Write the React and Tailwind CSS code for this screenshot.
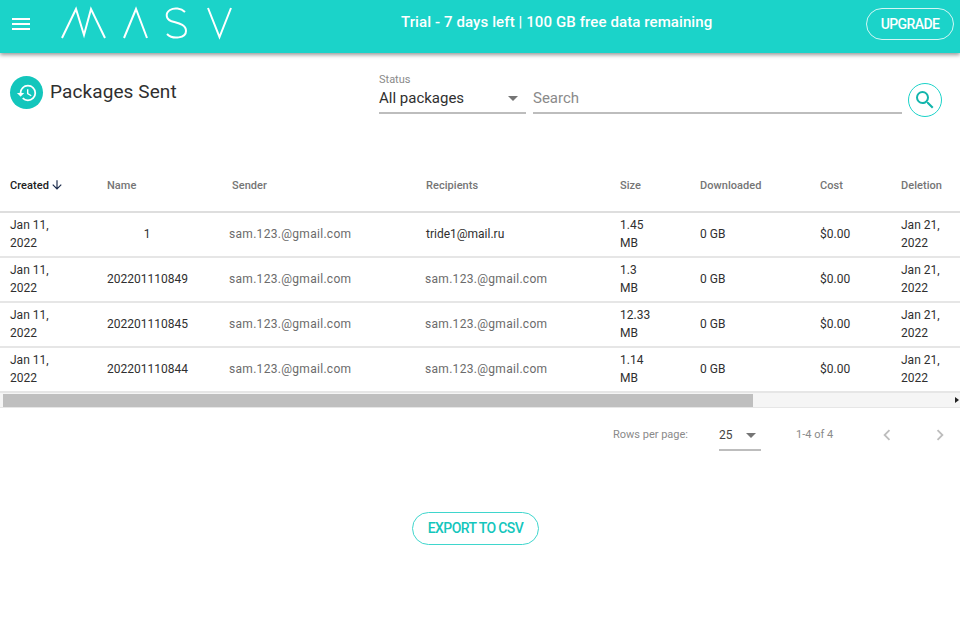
import { MdMenu, MdSearch, MdArrowDownward, MdChevronLeft, MdChevronRight, MdHistory, MdArrowDropDown } from 'react-icons/md'

const rows = [
  { name: '1', center: true, recipient: 'tride1@mail.ru', dark: true, size: ['1.45', 'MB'] },
  { name: '202201110849', recipient: 'sam.123.@gmail.com', size: ['1.3', 'MB'] },
  { name: '202201110845', recipient: 'sam.123.@gmail.com', size: ['12.33', 'MB'] },
  { name: '202201110844', recipient: 'sam.123.@gmail.com', size: ['1.14', 'MB'] },
]

const columns = 'grid grid-cols-[107px_122px_196px_195px_80px_120px_81px_59px]'

function Logo() {
  return (
    <svg width="172" height="36" viewBox="0 0 172 36" fill="none" stroke="white" strokeWidth="2">
      <path d="M1 32 L15 3 L23 29 L30 3 L44 32" />
      <path d="M63 32 L75 3 L86 32" />
      <path d="M124 6 C120 2 113 1.5 109 4 C104 7 105 13 110 15 C116 17 125 18 125 25 C125 32 112 34 106 28" />
      <path d="M147 2 L158.500 31 L170 2" />
    </svg>
  )
}

export default function App() {
  return (
    <div className="w-[960px] h-[640px] overflow-hidden bg-white font-['Roboto',sans-serif] text-[#2f2f2f]">
      <header className="h-[53px] bg-[#1bd3c9] shadow-[0_2px_4px_rgba(0,0,0,0.4)] flex items-start text-white relative">
        <MdMenu className="ml-[9px] mt-[12px] w-6 h-6" />
        <div className="ml-7 mt-[6px]"><Logo /></div>
        <div className="ml-[168px] w-[310px] mt-[13px] text-[15px] leading-[18px] tracking-[0.1px] font-medium whitespace-nowrap">Trial - 7 days left | 100 GB free data remaining</div>
        <button className="ml-auto mr-[6px] mt-[8px] w-[88px] h-[32px] rounded-full border border-white/80 text-[14px] font-medium tracking-[-0.6px]">UPGRADE</button>
      </header>

      <div className="flex h-[107px]">
        <div className="w-[379px] pl-[10px] pt-[23px] flex items-start gap-2">
          <div className="w-[33px] h-[33px] rounded-full bg-[#13c6bc] flex items-center justify-center">
            <MdHistory className="w-[22px] h-[22px] text-white" />
          </div>
          <h1 className="text-[19px] leading-[30px] pt-[1px] ml-[-1px] tracking-[0.1px]">Packages Sent</h1>
        </div>
        <div className="w-[147px] pt-[20px]">
          <div className="text-[11px] leading-[13px] text-[#8a8a8a]">Status</div>
          <div className="h-[28px] pb-[2px] flex items-center justify-between border-b-2 border-[#bdbdbd] pr-[1px] text-[15px]">
            All packages
            <MdArrowDropDown className="w-6 h-6 text-[#757575]" />
          </div>
        </div>
        <div className="w-[369px] ml-[7px] pt-[33px]">
          <div className="h-[28px] pb-[2px] flex items-center border-b-2 border-[#bdbdbd] text-[15px] text-[#8a8a8a]">Search</div>
        </div>
        <div className="pt-[30px] ml-[6px]">
          <div className="w-[34px] h-[34px] rounded-full border border-[#1bd3c9] flex items-center justify-center">
            <MdSearch className="w-6 h-6 text-[#13b5ac]" />
          </div>
        </div>
      </div>

      <div className={`${columns} h-[53px] border-b-2 border-[#dedede] text-[11px] font-medium text-[#757575] tracking-[0.05px] pt-[18px]`}>
        <div className="pl-[10px] text-[#222] flex items-start gap-[1px]">Created<MdArrowDownward className="w-[14px] h-[14px] text-[#1a2a4a]" /></div>
        <div>Name</div>
        <div className="pl-[3px]">Sender</div>
        <div className="pl-[1px]">Recipients</div>
        <div>Size</div>
        <div>Downloaded</div>
        <div>Cost</div>
        <div>Deletion</div>
      </div>

      {rows.map((r) => (
        <div key={r.name} className={`${columns} h-[45px] pb-[2px] border-b-2 border-[#e6e6e6] items-center text-[12px] leading-[18px]`}>
          <div className="pl-[10px]">Jan 11,<br />2022</div>
          <div className={r.center ? 'w-[80px] text-center' : ''}>{r.name}</div>
          <div className="text-[#6b6b6b] tracking-[0.3px]">sam.123.@gmail.com</div>
          <div className={r.dark ? 'pl-[1px]' : 'text-[#6b6b6b] tracking-[0.3px]'}>{r.recipient}</div>
          <div>{r.size[0]}<br />{r.size[1]}</div>
          <div>0 GB</div>
          <div>$0.00</div>
          <div className="whitespace-nowrap">Jan 21,<br />2022</div>
        </div>
      ))}

      <div className="h-[15px] flex items-center bg-[#f5f5f5] border-b border-[#e6e6e6] pl-[3px] relative">
        <div className="w-[750px] h-[13px] bg-[#bfbfbf]" />
        <span className="absolute right-[1px] top-[4px] w-0 h-0 border-y-[3.5px] border-y-transparent border-l-[4px] border-l-[#222]" />
      </div>

      <div className="flex items-center h-[54px] text-[11px]">
        <div className="ml-[613px] w-[106px] text-[#8a8a8a]">Rows per page:</div>
        <div className="w-[42px] h-[30px] flex items-center justify-between border-b-2 border-[#bdbdbd] mt-[1px] text-[12px] text-[#444]">
          25
          <MdArrowDropDown className="w-6 h-6 text-[#757575] mr-[-2px]" />
        </div>
        <div className="ml-[35px] w-[80px] text-[#8a8a8a]">1-4 of 4</div>
        <MdChevronLeft className="w-[22px] h-[22px] text-[#bdbdbd]" />
        <MdChevronRight className="ml-[31px] w-[22px] h-[22px] text-[#bdbdbd]" />
      </div>

      <div className="pt-[50px] pl-[412px]">
        <button className="w-[127px] h-[33px] rounded-full border border-[#3fd6cd] text-[#13c6bc] text-[14px] font-medium tracking-[-0.6px]">EXPORT TO CSV</button>
      </div>
    </div>
  )
}
